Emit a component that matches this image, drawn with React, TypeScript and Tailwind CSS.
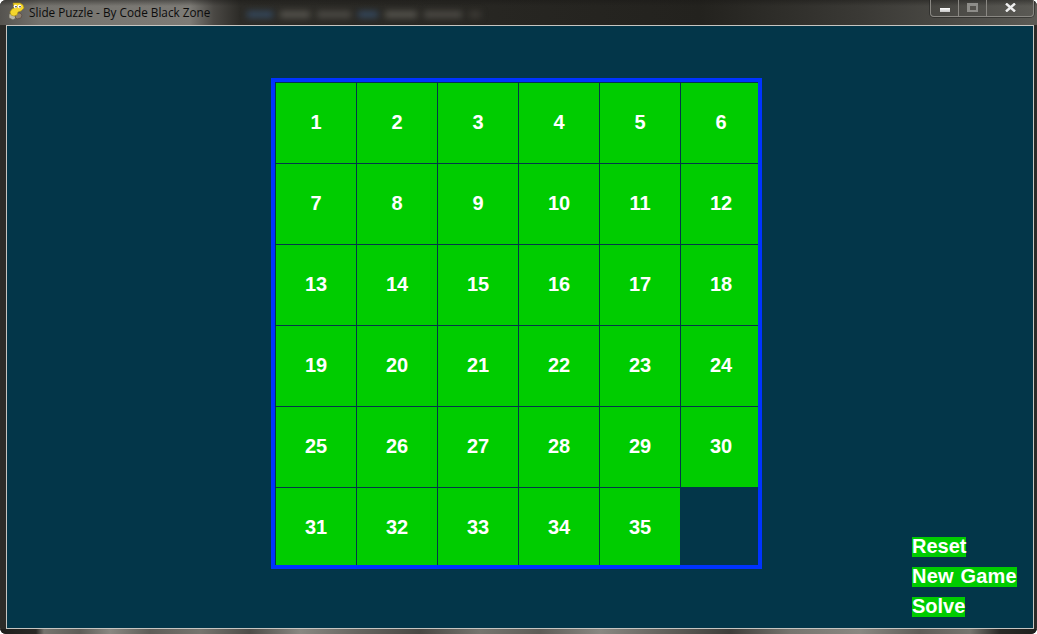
const tiles = Array.from({ length: 35 }, (_, i) => i + 1)

// blurred window behind the glass title bar
const smears = [
    { w: 'w-[26px]', color: 'bg-[#34475c]' },
    { w: 'w-[30px]', color: 'bg-[#55534d]' },
    { w: 'w-[34px]', color: 'bg-[#4c4a45]' },
    { w: 'w-[20px]', color: 'bg-[#34475c]' },
    { w: 'w-[32px]', color: 'bg-[#55534d]' },
    { w: 'w-[38px]', color: 'bg-[#4c4a45]' },
    { w: 'w-[12px]', color: 'bg-[#3c3a36]' },
]

function PythonIcon() {
    return (
        <svg width="17" height="18" viewBox="0 0 17 18" className="shrink-0">
            <path d="M1 12l3-1 3 1 1 4-3 2-4-2z" fill="#b9b6a8" stroke="#5f5c50" strokeWidth="0.7" />
            <path d="M8 11h4l2 2-1 3-4 1-2-2z" fill="#8c7f70" stroke="#5a4a44" strokeWidth="0.7" />
            <path d="M5 1h7l3 2 1 3-3 3-3 1-1 3-3 1-3-1-1-3 2-3 2-1z" fill="#f5d62c" stroke="#a88f12" strokeWidth="0.6" />
            <circle cx="7.5" cy="4.5" r="1.8" fill="#fff" />
            <circle cx="11.5" cy="4.5" r="1.8" fill="#fff" />
            <circle cx="8" cy="4.7" r="0.8" fill="#222" />
            <circle cx="12" cy="4.7" r="0.8" fill="#222" />
        </svg>
    )
}

function WindowButtons() {
    return (
        <div className="ml-auto mr-[3px] flex h-[17px] w-[104px] rounded-b-[4px] border border-t-0 border-[#8a8883] shadow-[0_0_0_1px_rgba(30,30,28,0.5)]">
            <div className="flex w-[28px] justify-center border-r border-[#8a8883] pt-[8px]">
                <div className="h-[4px] w-[10px] bg-gradient-to-b from-white to-[#c4c4c4]" />
            </div>
            <div className="flex w-[28px] justify-center border-r border-[#8a8883] pt-[3px]">
                <div className="flex h-[9px] w-[11px] items-center justify-center bg-[#8e8d89]">
                    <div className="h-[4px] w-[6px] bg-[#55534e]" />
                </div>
            </div>
            <div className="flex flex-1 justify-center pt-[3px]">
                <svg width="11" height="9" viewBox="0 0 11 9">
                    <path d="M1 0.5l9 8M10 0.5l-9 8" stroke="#eeeeee" strokeWidth="2.4" />
                </svg>
            </div>
        </div>
    )
}

function GameButton({ label, className }: { label: string; className: string }) {
    return (
        <div className={`flex h-5 items-center bg-[#00cc00] pb-[2px] text-[20px] font-bold leading-none text-white ${className}`}>
            {label}
        </div>
    )
}

export default function App() {
    return (
        <div className="flex h-[634px] w-[1037px] flex-col overflow-hidden rounded-[6px] bg-[#2c2b28] font-['Liberation_Sans',sans-serif]">
            <div className="flex h-[25px] shrink-0 items-start bg-[linear-gradient(180deg,rgba(25,24,22,0.45)_0px,rgba(25,24,22,0)_6px),linear-gradient(90deg,#55534f_0px,#75736e_40px,#7d7b76_190px,#4a4844_214px,#2c2b27_240px,#23221e_700px,#3a3935_860px,#5b5a55_1037px)]">
                <div className="flex items-start pl-[8px] pt-[2px]">
                    <PythonIcon />
                    <span className="ml-[4px] pt-[2px] font-['Open_Sans',sans-serif] text-[11.75px] leading-[16px] text-[#0c0c0c]">Slide Puzzle - By Code Black Zone</span>
                </div>
                <div className="ml-[37px] mt-[11px] flex h-[7px] gap-[7px] blur-[3px]">
                    {smears.map((s, i) => (
                        <div key={i} className={`h-full ${s.w} ${s.color}`} />
                    ))}
                </div>
                <WindowButtons />
            </div>
            <div className="ml-[6px] mr-[3px] flex-1 border border-[#c6c5c1] bg-[#033649]">
                <div className="relative flex h-[602px] items-start pl-[264px] pt-[52px]">
                    <div className="grid h-[491px] w-[491px] grid-cols-[repeat(6,80px)] grid-rows-[repeat(6,80px)] gap-px overflow-hidden border-4 border-[#0033ff] pl-px pt-px">
                        {tiles.map((n) => (
                            <div key={n} className="flex items-center justify-center bg-[#00cc00] pb-[2px] text-[20px] font-bold text-white">
                                {n}
                            </div>
                        ))}
                    </div>
                    <div className="absolute left-[905px] top-[511px] flex flex-col gap-[10px]">
                        <GameButton label="Reset" className="w-[54px]" />
                        <GameButton label="New Game" className="w-[105px] tracking-[0.2px] [word-spacing:1px]" />
                        <GameButton label="Solve" className="w-[53px]" />
                    </div>
                </div>
            </div>
            <div className="h-[5px] shrink-0 bg-[linear-gradient(90deg,#1f1e1c_0px,#2a2926_36px,#77756f_44px,#5f5d58_80px,#8a8882_110px,#5f5d58_150px,#77756f_200px,#4f4d49_250px,#8a8882_300px,#66645f_360px,#4a4844_420px,#77756f_480px,#5f5d58_540px,#8a8882_600px,#66645f_660px,#3f3d3a_730px,#77756f_790px,#8a8882_860px,#5f5d58_920px,#77756f_970px,#2a2926_1000px,#1f1e1c_1037px)]" />
        </div>
    )
}
